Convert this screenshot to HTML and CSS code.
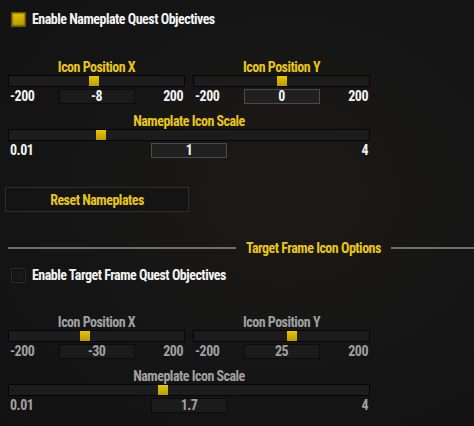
FILE: index.html
```html
<!DOCTYPE html>
<html lang="en">
<head>
    <meta charset="UTF-8">
    <title>Quest Objectives</title>
    <link rel="stylesheet" href="styles.css">
</head>
<body>
<div id="options">
    <div class="check-row">
        <span class="check on"></span>
        <span class="check-label">Enable Nameplate Quest Objectives</span>
    </div>

    <div class="pair first-pair">
        <div class="slider">
            <div class="slider-title">Icon Position X</div>
            <div class="track"><span class="thumb" style="left: 80px"></span></div>
            <div class="values"><span>-200</span><span class="box">-8</span><span class="max">200</span></div>
        </div>
        <div class="slider">
            <div class="slider-title">Icon Position Y</div>
            <div class="track"><span class="thumb" style="left: 83px"></span></div>
            <div class="values"><span>-200</span><span class="box boxlight">0</span><span class="max">200</span></div>
        </div>
    </div>
    <div class="slider wide">
        <div class="slider-title">Nameplate Icon Scale</div>
        <div class="track"><span class="thumb" style="left: 87px"></span></div>
        <div class="values"><span>0.01</span><span class="box boxlight">1</span><span class="max">4</span></div>
    </div>

    <button class="reset">Reset Nameplates</button>

    <div class="section-head">
        <span class="line left"></span>
        <span class="head-text">Target Frame Icon Options</span>
        <span class="line"></span>
    </div>

    <div class="check-row second">
        <span class="check"></span>
        <span class="check-label">Enable Target Frame Quest Objectives</span>
    </div>

    <div class="disabled">
        <div class="pair">
            <div class="slider">
                <div class="slider-title">Icon Position X</div>
                <div class="track"><span class="thumb" style="left: 71px"></span></div>
                <div class="values"><span>-200</span><span class="box">-30</span><span class="max">200</span></div>
            </div>
            <div class="slider">
                <div class="slider-title">Icon Position Y</div>
                <div class="track"><span class="thumb" style="left: 93px"></span></div>
                <div class="values"><span>-200</span><span class="box">25</span><span class="max">200</span></div>
            </div>
        </div>
        <div class="slider wide">
            <div class="slider-title">Nameplate Icon Scale</div>
            <div class="track"><span class="thumb" style="left: 149px"></span></div>
            <div class="values"><span>0.01</span><span class="box">1.7</span><span class="max">4</span></div>
        </div>
    </div>
</div>
</body>
</html>
```

FILE: styles.css
```css
html, body{
    margin: 0;
    height: 100%;
    overflow: hidden;
}
body{
    background: radial-gradient(ellipse at 60% 45%, #1c1a18 0%, #151515 55%, #121212 100%);
    color: #f2f2f2;
    font-family: "Roboto Condensed", "Open Sans Condensed", sans-serif;
    font-weight: bold;
    font-size: 14px;
    letter-spacing: -0.5px;
}
#options{
    padding: 12px 0 0 8px;
}
.check-row{
    display: flex;
    align-items: center;
    gap: 6px;
    height: 15px;
    padding-left: 3px;
}
.check-row.second{
    margin-top: 13px;
}
.check{
    width: 13px;
    height: 13px;
    border: 1px solid #2a2a2a;
    background: #181818;
    box-shadow: inset 0 0 2px #000;
}
.check.on{
    border-color: #6a5600;
    background: linear-gradient(#e3c100, #b89a00);
}
.check-label{
    line-height: 15px;
}

.pair{
    display: grid;
    grid-template-columns: 177px 177px;
    gap: 8px;
    width: 362px;
}
.first-pair{
    margin-top: 32px;
}
.slider.wide{
    width: 362px;
    margin-top: 9px;
}
.slider-title{
    text-align: center;
    color: #e8c51a;
    line-height: 16px;
    height: 16px;
}
.track{
    position: relative;
    height: 10px;
    background: #1c1c1c;
    border: 1px solid #060606;
}
.thumb{
    position: absolute;
    top: 0;
    width: 10px;
    height: 10px;
    background: linear-gradient(#e8c700, #b99b00);
}
.values{
    display: grid;
    grid-template-columns: 1fr 76px 1fr;
    margin-top: 2px;
    height: 15px;
    line-height: 15px;
    padding: 0 2px;
}
.values .max{
    text-align: right;
}
.box{
    text-align: center;
    background: #1b1b1b;
    border: 1px solid #0c0c0c;
    height: 13px;
    line-height: 13px;
}
.boxlight{
    border-color: #4a4a4a;
    background: #202020;
}

.reset{
    display: block;
    margin: 29px 0 0 -3px;
    width: 184px;
    height: 25px;
    background: #141414;
    border: 1px solid #2e2e2e;
    color: #e8c51a;
    font: inherit;
    letter-spacing: inherit;
    cursor: pointer;
}

.section-head{
    display: flex;
    align-items: center;
    gap: 10px;
    margin-top: 29px;
    height: 14px;
}
.line{
    flex: 1;
    height: 2px;
    background: #6e6e6e;
}
.line.left{
    flex: 0 0 228px;
}
.head-text{
    color: #e8c51a;
    line-height: 14px;
}

.disabled{
    margin-top: 31px;
}
.disabled .slider-title,
.disabled .values{
    color: #a0a0a0;
}
```
